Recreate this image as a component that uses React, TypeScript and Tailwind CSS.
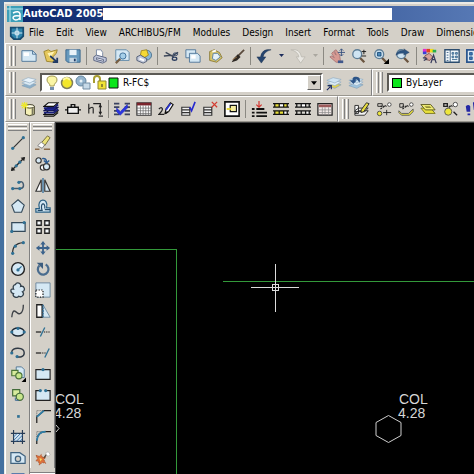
import type { ReactNode } from "react";

type Tool = { label: string; art: ReactNode };

const navy = "#1f3a66";
const steel = "#4a7296";
const ice = "#d5e8f4";

const sheets = (top: string, mid: string) => (
  <>
    <path d="M1 12l7-3 9 2-7 4z" fill={mid} stroke="#7f9db5" strokeWidth=".7" />
    <path d="M1 9l7-3 9 2-7 4z" fill="#dcebf5" stroke="#8fabc1" strokeWidth=".7" />
    <path d="M1 6l7-3 9 2-7 4z" fill={top} stroke="#8fabc1" strokeWidth=".7" />
  </>
);

const lens = (
  <>
    <path d="M10 11l5 5" stroke="#6b5540" strokeWidth="2.6" />
    <circle cx="7" cy="7" r="5" fill="#cfe4f2" stroke="#5d7d96" strokeWidth="1.5" />
  </>
);

const fileTools: Tool[] = [
  { label: "New", art: <><path d="M1 3h12l4 4v8H1z" fill={ice} stroke={steel} /><path d="M13 3v4h4" fill="none" stroke={steel} /><path d="M3 5h6v4H3z" fill="#fff" /></> },
  { label: "Open", art: <><path d="M1 4l5-2 3 2 7-2-1 4-4 4 2 6-9-1z" fill="#e5c75b" stroke="#9a822b" /><path d="M5 6l8-2-5 7z" fill="#fff4b5" /><path d="M8 9l7 6m-4 1h5v-5" fill="none" stroke={navy} strokeWidth="2" /></> },
  { label: "Save", art: <><path d="M1 2h16v14H3l-2-2z" fill="#6699bd" stroke="#35628a" /><path d="M5 2h8v6H5z" fill="#e8f2f8" /><path d="M5 11h8v5H5z" fill="#c7d7e3" /><path d="M10 12h2v3h-2z" fill={navy} /></> },
];
const printTools: Tool[] = [
  { label: "Plot", art: <><path d="M5 9V2h5l2 3v5z" fill="#fff" stroke="#7484a0" /><path d="M2 10l3-2 11 3v4l-4 2-10-3z" fill="#c3c9dc" stroke="#56607d" /><path d="M5 11l8 2v2l-8-2z" fill="#f8f8ff" stroke="#56607d" /></> },
  { label: "Plot Preview", art: <><path d="M2 2h12l3 3v9H2z" fill={ice} stroke="#5c86a6" /><circle cx="10" cy="9" r="3.5" fill="#a5cfe9" stroke="#376a95" /><path d="M7 12l-5 5" stroke="#765e43" strokeWidth="2.5" /></> },
  { label: "Publish", art: <><circle cx="12" cy="8" r="5.5" fill="#8bb8d5" stroke="#476f8d" /><path d="M6 3l6-1 2 6-5 3-4-3z" fill="#f5d935" stroke="#a4881a" /><path d="M1 10l4-2 7 4v3l-4 2-7-3z" fill="#c3cadb" stroke="#4a5771" /><path d="M4 12l5 2" stroke="#fff" strokeWidth="2" /></> },
];
const clipTools: Tool[] = [
  { label: "Cut", art: <><path d="M1 9l11-1 5-3M3 5l9 5" fill="none" stroke="#3c4658" strokeWidth="1.6" /><ellipse cx="14" cy="7" rx="2.5" ry="1.5" fill="none" stroke="#2c3e60" /><ellipse cx="13" cy="12" rx="2.5" ry="1.8" fill="none" stroke="#2c3e60" strokeWidth="1.5" /></> },
  { label: "Copy", art: <><path d="M1 2h11v9H1z" fill={ice} stroke={steel} /><path d="M5 6h9l3 3v7H5z" fill={ice} stroke={steel} /><path d="M7 8h5v4H7z" fill="#fff" /></> },
  { label: "Paste", art: <><path d="M3 4l5-2 6 3 3 6-6 5-8-2z" fill="#d9c66c" stroke="#8b7a35" /><path d="M7 6h5l3 4-5 4-4-2z" fill="#e5f1f8" stroke="#537ca0" /><path d="M6 4l4-1" stroke="#fff" strokeWidth="2" /></> },
  { label: "Match Properties", art: <><path d="M17 2l-8 8" stroke="#5a4a3c" strokeWidth="2" /><path d="M10 7l3 3-4 4-6 2 3-5z" fill="#2e2925" /><path d="M4 13l5-3" stroke="#9e784b" /></> },
];
const viewTools: Tool[] = [
  { label: "Pan", art: <><path d="M3 6l2-2 3 4-2-5 2-1 4 6 1 8H8L1 10l2-1 3 2z" fill="#d79a93" stroke="#a87878" /><path d="M14 1v8M10 5h8M12 3l2-2 2 2M12 7l2 2 2-2" fill="none" stroke="#37517e" /><path d="M10 14h6v3h-6z" fill="#40588b" /></> },
  { label: "Zoom Realtime", art: <>{lens}<path d="M12 4h5M14.500 2v5M12 9h5" stroke="#111" /></> },
  { label: "Zoom Window", art: <>{lens}<path d="M5 5h4v4H5z" fill="#4b89ba" stroke="#1c4a76" /><path d="M18 12v6h-6z" fill="#000" /></> },
  { label: "Zoom Previous", art: <>{lens}<path d="M1 8q2-6 10-5l-1-2 6 4-6 3V6Q6 5 1 8z" fill="#2d5582" stroke="#1b365a" strokeWidth=".5" /></> },
];
const paletteTools: Tool[] = [
  { label: "Properties", art: <><path d="M1 1h4v4H1z" fill="#e32bd1" /><path d="M5 1h4v4H5z" fill="#e34020" /><path d="M9 1h4v4H9z" fill="#f2db1e" /><path d="M1 4h4v3H1z" fill="#3642d7" /><path d="M12 2h4v3h-4z" fill="#28af4b" /><path d="M3 9l5-3 4 4-3 4-5-1z" fill="#d8a298" stroke="#7c5151" /><path d="M1 11h4M2 14l4-2M10 17l3-9 3 9M11 13h4" fill="none" stroke="#383b5d" strokeWidth="1.4" /></> },
  { label: "DesignCenter", art: <><path d="M1 2h16v14H1z" fill="#f5fafc" stroke="#2b4c6e" strokeWidth="1.5" /><path d="M7 2v14M3 5h2M3 8h2M3 11h2M3 14h2" stroke="#375d83" /><path d="M9 5h2v2H9zM13 5h2v2h-2zM9 9h2v2H9zM13 9h2v2h-2zM9 13h6" fill="#89aeca" stroke="#3e6b91" /></> },
  { label: "Tool Palettes", art: <><path d="M1 2h16v14H1z" fill="#dceaf5" stroke="#2b568e" strokeWidth="2" /><path d="M4 5h3v3H4zM4 10h3v3H4zM10 5h5M10 9h5" fill="#3d77b5" stroke="#24578e" /></> },
];

const block = <path d="M2 7h9v9H2zM2 10h9M2 13h9" fill="#f2f2f2" stroke="#333" strokeWidth="1.3" />;
const rack = (fill: string) => (
  <>
    <path d="M2 3h14v4H2zM2 11h14v4H2z" fill={fill} />
    <path d="M7 3h5v4H7zM12 11h4v4h-4z" fill="#fff" />
    <path d="M0 3h18M0 7h18M0 11h18M0 15h18M2 3v4M7 3v4M12 3v4M16 3v4M2 11v4M7 11v4M12 11v4M16 11v4" stroke="#111" strokeWidth="1.4" />
  </>
);

const archTools: Tool[] = [
  { label: "New Asset", art: <><path d="M5 6v9q4 3 10 0V6z" fill="#f4efb6" stroke="#33301c" /><ellipse cx="10" cy="6" rx="5" ry="2" fill="#fffde4" stroke="#33301c" /><path d="M12 8h2v8h-2z" fill="#77755c" /><path d="M4 1v8M0 5h8M1 2l6 6M7 2L1 8" stroke="#ede82b" strokeWidth="1.3" /></> },
  { label: "Layers", art: <><path d="M1 15l5-4h11l-5 4z" fill="#fff" stroke="#111" strokeWidth="1.3" /><path d="M1 11l5-4h11l-5 4z" fill="#1d2596" stroke="#0e1250" strokeWidth="1.3" /><path d="M1 6l5-4h11l-5 4z" fill="#fff" stroke="#111" strokeWidth="1.3" /><path d="M1 8h11l5-4M1 13h11l5-4" fill="none" stroke="#191e79" strokeWidth="2" /><path d="M1 17h11l5-4" fill="none" stroke="#111" strokeWidth="1.3" /></> },
  { label: "Room Tag", art: <><path d="M3 7h12v7H3zM7 7V4h4v3" fill="#eee" stroke="#111" strokeWidth="1.5" /><path d="M0 10h3M15 10h3" stroke="#111" strokeWidth="1.3" /></> },
  { label: "Text Height", art: <><path d="M2 3v11M2 9q5-4 5 0v5M7 3h8v11" fill="none" stroke="#222" strokeWidth="1.3" /><path d="M15 3l2 4h-4zM13 12h4l-2 4z" fill="#222" /><path d="M13 17h5" stroke="#222" strokeWidth="1.3" /></> },
];
const recordTools: Tool[] = [
  { label: "Check Records", art: <><path d="M0 2h6v2H0zM0 6h6v2H0zM0 10h6v2H0zM0 14h6v2H0zM12 2h6v2h-6zM12 6h6v2h-6zM12 10h6v2h-6zM12 14h6v2h-6z" fill="#3b4260" /><path d="M3 8l4 4 8-8v4l-8 8-4-4z" fill="#2a35e0" stroke="#2129c0" strokeWidth=".7" /></> },
  { label: "Table", art: <><path d="M1 2h16v14H1z" fill="#fff" stroke="#333" strokeWidth="1.3" /><path d="M1 2h16v3H1z" fill="#7b242c" /><path d="M1 8h16M1 11h16M1 14h16M5 5v11M8 5v11M11 5v11M14 5v11" stroke="#666" strokeWidth=".8" /></> },
  { label: "Edit Data", art: <><path d="M1 9q3-3 4 0 0 2-4 6h6" fill="none" stroke="#222" strokeWidth="1.4" /><path d="M8 14l1-5 5-7 3 2-5 8z" fill="#fff" stroke="#111" strokeWidth="1.3" /><path d="M9 10l5-7" stroke="#2b35cf" strokeWidth="2" /><path d="M8 14l3-2" stroke="#111" strokeWidth="2" /></> },
  { label: "Accept", art: <>{block}<path d="M11 7l2 4 4-10" fill="none" stroke="#2528cf" strokeWidth="1.8" /></> },
  { label: "Reject", art: <>{block}<path d="M11 1l6 6M17 1l-6 6" stroke="#d43b30" strokeWidth="1.4" /></> },
  { label: "Link", art: <><path d="M1 1h16v16H1z" fill="#fff" stroke="#111" strokeWidth="1.8" /><path d="M7 5h7v7H7z" fill="#f5eda0" stroke="#111" strokeWidth="1.3" /><path d="M3 9h5" stroke="#e5d52b" strokeWidth="2" /></> },
];
const listTools: Tool[] = [
  { label: "Insert List", art: <><path d="M9 0v7M6 4l3 3 3-3" fill="none" stroke="#d3322c" strokeWidth="1.3" /><path d="M6 9h9M6 13h12M6 17h12M1 9h3M1 13h3M1 17h3" stroke="#111" strokeWidth="2" /></> },
  { label: "Stack Plan", art: rack("#e8df39") },
  { label: "Block Plan", art: rack("#d9d7d0") },
  { label: "Report", art: <><path d="M1 3h16v13H1z" fill="#f2e9e7" stroke="#222" strokeWidth="1.4" /><path d="M2 4h14v3H2z" fill="#9d5b5b" /><path d="M2 10h14M2 13h14M6 7v9M9 7v9M13 7v9" stroke="#888" strokeWidth=".8" /></> },
];

const nodes = <path d="M5 6h7M5 9l6-4" fill="none" stroke="#222" strokeWidth="1.2" strokeDasharray="2 1" />;
const assetTools: Tool[] = [
  { label: "Edit Layer", art: <><path d="M1 5h4v9H1zM1 11l4-3h11l-4 4H1zM1 14l4-3h11l-4 5H1z" fill="#f5f5f5" stroke="#222" /><path d="M8 10l6-8 3 1-6 9-3 1z" fill="#e8dd42" stroke="#222" /></> },
  { label: "Move Node", art: <>{nodes}<circle cx="4" cy="14" r="2.500" fill="#eee63b" stroke="#444" /><circle cx="15" cy="4" r="2" fill="#fff" stroke="#444" /><path d="M2 3h5v3H2zM8 13h9M12 10v6" fill="none" stroke="#222" /></> },
  { label: "Layer Node", art: <>{nodes}<path d="M1 11l3 3h8l5-5v3l-4 4H4l-3-3z" fill="#eee63b" stroke="#555" /><circle cx="15" cy="4" r="2" fill="#fff" stroke="#444" /><path d="M2 3h4v4H2z" fill="none" stroke="#222" /></> },
  { label: "Isolate Layer", art: <><path d="M1 8h11l5 6H6z" fill="#e9e13c" stroke="#77731f" /><path d="M1 4h11l5 6H6z" fill="#f3ef75" stroke="#55521b" /><path d="M5 6h6l2 2H7z" fill="#948e37" /></> },
  { label: "Node Status", art: <>{nodes}<circle cx="7" cy="12" r="4" fill="#eee63b" stroke="#555" /><circle cx="15" cy="4" r="2.500" fill="#fff" stroke="#444" /><path d="M2 3h4v3H2zM13 12l4 4" fill="none" stroke="#222" strokeWidth="1.5" /></> },
  { label: "Walk", art: <path d="M2 6q3-3 5 0v6H3zM4 14h3v2H4zM10 2q4-3 6 1v7h-5zM12 12h4v3h-4z" fill="#2428a5" /> },
];

const dot = (x: number, y: number) => <circle cx={x} cy={y} r="1.800" fill="#2f7094" />;
const drawTools: Tool[] = [
  { label: "Line", art: <><path d="M3 15L15 3" stroke="#333" strokeWidth="1.3" />{dot(3, 15)}{dot(15, 3)}</> },
  { label: "Construction Line", art: <><path d="M2 16L16 2" stroke="#222" strokeWidth="1.5" /><path d="M1 17l1-5 4 4zM17 1l-5 1 4 4z" fill="#222" />{dot(7, 11)}{dot(11, 7)}</> },
  { label: "Polyline", art: <><path d="M2 13h10q4-1 3-5t-5-2" fill="none" stroke="#445b70" strokeWidth="1.7" />{dot(3, 13)}{dot(11, 13)}{dot(10, 6)}</> },
  { label: "Polygon", art: <path d="M9 2l7 6-3 8H5L2 8z" fill={ice} stroke="#354a5a" strokeWidth="1.3" /> },
  { label: "Rectangle", art: <><path d="M2 4h15v10H2z" fill={ice} stroke="#354a5a" strokeWidth="1.4" />{dot(2, 14)}{dot(16, 4)}</> },
  { label: "Arc", art: <><path d="M3 16Q2 4 15 3" fill="none" stroke="#333" strokeWidth="1.4" />{dot(3, 15)}{dot(6, 7)}{dot(15, 3)}</> },
  { label: "Circle", art: <><circle cx="9" cy="9" r="7.200" fill={ice} stroke="#222" strokeWidth="1.6" /><path d="M9 10l4-4" stroke="#2f7094" strokeWidth="1.4" />{dot(9, 10)}</> },
  { label: "Revision Cloud", art: <path d="M6 3c2-4 7-1 6 2 4-1 6 4 2 6 3 3-1 7-4 5-3 3-8 0-6-3-4-1-4-6 0-5-1-3 0-5 2-5z" fill={ice} stroke="#34424d" strokeWidth="1.5" /> },
  { label: "Spline", art: <path d="M2 16c1-10 4-7 6-5s7 2 7-9" fill="none" stroke="#3d4146" strokeWidth="1.5" /> },
  { label: "Ellipse", art: <><ellipse cx="9" cy="9" rx="7" ry="4.500" fill={ice} stroke="#1d2833" strokeWidth="1.5" />{dot(2, 9)}{dot(16, 9)}{dot(9, 5)}</> },
  { label: "Ellipse Arc", art: <><path d="M2 8c0-6 14-6 14 1 0 5-6 5-8 4" fill="none" stroke="#303a45" strokeWidth="1.6" />{dot(2, 9)}{dot(8, 13)}</> },
  { label: "Insert Block", art: <><path d="M7 1h6l3 3v9H7z" fill={ice} stroke="#4c7394" /><path d="M2 5h7v6H2z" fill="#d7eb9c" stroke="#4b7338" strokeWidth="1.3" /><circle cx="10" cy="11" r="3.500" fill="#c9e68c" stroke="#4b7338" strokeWidth="1.3" /><path d="M18 13v5h-5z" fill="#000" /></> },
  { label: "Make Block", art: <><path d="M3 3h8v7H3z" fill="#d7eb9c" stroke="#446b3a" strokeWidth="1.3" /><circle cx="11" cy="11" r="4" fill="#c9e68c" stroke="#446b3a" strokeWidth="1.3" /><path d="M6 12v3h4" fill="none" stroke="#2f6090" /></> },
  { label: "Point", art: <path d="M8 8h3v3H8z" fill="#2f7094" /> },
  { label: "Hatch", art: <><path d="M4 5h10v9H4z" fill="#d3e5f2" /><path d="M4 1v16M14 1v16M1 5h16M1 14h16" stroke="#263b55" strokeWidth="1.3" /><path d="M4 9l4-4M4 13l8-8M7 14l7-7M11 14l3-3" stroke="#2f68a0" /></> },
  { label: "Region", art: <><path d="M1 15V3h10l6 4v8z" fill={ice} stroke="#41637f" strokeWidth="1.4" /><circle cx="9" cy="10" r="3" fill="#d4d0c8" stroke="#41637f" strokeWidth="1.4" /></> },
  { label: "Insert Table", art: <><path d="M2 3h14v13H2z" fill="#fff" stroke="#385d93" /><path d="M2 3h14v3H2z" fill="#4d7bbd" /><path d="M7 6v10M11 6v10M2 10h14" stroke="#6b90c4" /></> },
];
const modifyTools: Tool[] = [
  { label: "Erase", art: <><path d="M7 9l7-8 3 2-6 9z" fill="#ece27b" stroke="#6b6430" /><path d="M3 12l4-4 4 3-3 4z" fill="#fff" stroke="#777" /><path d="M0 16h5M10 16h7" stroke="#8b6a4a" strokeWidth="1.5" /></> },
  { label: "Copy Object", art: <><circle cx="4" cy="5" r="3" fill={ice} stroke="#333" strokeWidth="1.3" /><circle cx="9" cy="13" r="3" fill="#fff" stroke="#333" strokeWidth="1.3" /><circle cx="13" cy="12" r="3.500" fill={ice} stroke="#333" strokeWidth="1.4" /><path d="M8 3q5-1 5 4M10 5l3 3 3-3" fill="none" stroke="#2c5c91" strokeWidth="1.6" /></> },
  { label: "Mirror", art: <><path d="M7 3v13H1z" fill="#fff" stroke="#333" strokeWidth="1.3" /><path d="M11 3v13h6z" fill={ice} stroke="#333" strokeWidth="1.3" /><path d="M9 1v17" stroke="#2b6b9d" strokeWidth="1.4" /></> },
  { label: "Offset", art: <><path d="M1 16v-4h4c-4-12 11-13 8-1h4v5z" fill={ice} stroke="#2d6286" strokeWidth="1.4" /><path d="M3 14h5c-3-9 4-10 3-2M11 13h6" fill="none" stroke="#244a68" strokeWidth="1.3" /></> },
  { label: "Array", art: <path d="M2 2h5v5H2zM11 2h5v5h-5zM2 11h5v5H2zM11 11h5v5h-5z" fill="#f8fbfd" stroke="#222" strokeWidth="1.5" /> },
  { label: "Move", art: <><path d="M9 3v12M3 9h12" stroke="#3c638c" strokeWidth="2" /><path d="M9 1l3 4H6zM9 17l3-4H6zM1 9l4-3v6zM17 9l-4-3v6z" fill="#3c638c" /></> },
  { label: "Rotate", art: <><path d="M5 5a6 6 0 1 0 7-1" fill="none" stroke="#4a6c8e" strokeWidth="2.500" /><path d="M2 2h7v7z" fill="#3d5d7e" /></> },
  { label: "Scale", art: <><path d="M1 1h16v16H1z" fill={ice} stroke="#68839a" /><path d="M1 9h8v8H1z" fill="#fff" stroke="#222" strokeWidth="1.4" strokeDasharray="1.500 1.500" /></> },
  { label: "Stretch", art: <><path d="M9 2l8 14H9z" fill={ice} stroke="#6b899e" /><path d="M2 2h6v14H2z" fill="#fff" stroke="#222" strokeWidth="1.5" /><path d="M9 2v14" stroke="#2f6c96" strokeDasharray="2 1" strokeWidth="1.5" /></> },
  { label: "Trim", art: <><path d="M1 9h6" stroke="#222" strokeWidth="1.4" /><path d="M10 9h7" stroke="#222" strokeWidth="1.4" strokeDasharray="1.500 1" /><path d="M6 14l5-10" stroke="#2f7094" strokeWidth="1.5" /></> },
  { label: "Extend", art: <><path d="M1 9h6" stroke="#222" strokeWidth="1.4" /><path d="M8 9h5" stroke="#222" strokeWidth="1.4" strokeDasharray="1.500 1" /><path d="M11 14l5-10" stroke="#2f7094" strokeWidth="1.5" /></> },
  { label: "Break at Point", art: <><path d="M1 4h16v11H1z" fill={ice} stroke="#222" strokeWidth="1.3" />{dot(9, 4)}</> },
  { label: "Break", art: <><path d="M1 4h16v11H1z" fill={ice} /><path d="M5 4H1v11h16V4h-4" fill="none" stroke="#222" strokeWidth="1.4" />{dot(6, 4)}{dot(12, 4)}</> },
  { label: "Chamfer", art: <><path d="M2 17V10l8-7h8" fill="none" stroke="#222" strokeWidth="1.4" /><path d="M2 10l8-7" stroke="#2f7fa8" strokeWidth="2" /><path d="M2 9V3h7" fill="none" stroke="#555" strokeDasharray="1 1" /></> },
  { label: "Fillet", art: <><path d="M2 17v-4Q3 3 12 3h6" fill="none" stroke="#222" strokeWidth="1.4" /><path d="M2 13Q3 3 12 3" fill="none" stroke="#2f7fa8" strokeWidth="2" /><path d="M2 9V3h5" fill="none" stroke="#555" strokeDasharray="1 1" /></> },
  { label: "Explode", art: <><path d="M1 6l4 1 2-2 1 3 4 0-2 3 2 4-4-1-3 3-1-4-3-1 2-2z" fill="#dc713b" stroke="#9d4a2a" strokeWidth=".8" strokeDasharray="2 1" /><path d="M5 9l3 1-2 3z" fill="#f7db5d" /><path d="M10 9l3-4" stroke="#554b42" strokeWidth="1.500" /><path d="M12 3l3-1 2 3-2 2-2-1z" fill="#fff" stroke="#aaa" strokeWidth=".7" /></> },
];

const menus = ["File", "Edit", "View", "ARCHIBUS/FM", "Modules", "Design", "Insert", "Format", "Tools", "Draw", "Dimension"];

function Tools({ items, vertical = false }: { items: Tool[]; vertical?: boolean }) {
  return (
    <div className={vertical ? "flex flex-col items-center" : "flex shrink-0 items-center"}>
      {items.map((tool) => (
        <button key={tool.label} aria-label={tool.label} className="flex h-[21px] w-[22px] shrink-0 items-center justify-center hover:bg-white/40">
          <svg viewBox="0 0 18 18" className="size-4" fill="none">{tool.art}</svg>
        </button>
      ))}
    </div>
  );
}

function Grip() {
  return (
    <div className="flex shrink-0 gap-px self-stretch px-0.5 py-0.5">
      <span className="w-[3px] border-r border-l border-r-[#808080] border-l-white" />
      <span className="w-[3px] border-r border-l border-r-[#808080] border-l-white" />
    </div>
  );
}

function Sep() {
  return <span className="mx-0.5 h-[18px] w-px shrink-0 bg-[#8b8982]" />;
}

function Bar({ children, fill = false }: { children: ReactNode; fill?: boolean }) {
  return (
    <div className={`flex items-center overflow-hidden border-t border-b border-l border-t-white border-b-[#99968e] border-l-white pl-px ${fill ? "min-w-0 flex-1" : "shrink-0 border-r border-r-[#808080]"}`}>
      {children}
    </div>
  );
}

function SideBar({ items }: { items: Tool[] }) {
  return (
    <div className="w-[25px] border-t border-r border-l border-t-white border-r-[#808080] border-l-white">
      <div className="mx-0.5 my-px flex flex-col gap-px">
        <span className="h-[3px] border-t border-b border-t-white border-b-[#808080]" />
        <span className="h-[3px] border-t border-b border-t-white border-b-[#808080]" />
      </div>
      <Tools items={items} vertical />
    </div>
  );
}

function Menu() {
  return (
    <nav className="flex h-[21px] shrink-0 items-center gap-3 overflow-hidden pl-1 text-[10px] whitespace-nowrap">
      <svg viewBox="0 0 18 18" className="-mr-2 size-4 shrink-0">
        <path d="M1 2h16v11l-4 4H5l-4-4z" fill="#164b70" />
        <path d="M3 4h12v8l-3 3H6l-3-3z" fill="#2d83ab" />
        <path d="M9 3v12M3 9h12M7 7h4v4H7z" fill="none" stroke="#e7f5fc" />
      </svg>
      {menus.map((name) => (
        <button key={name} className="shrink-0">{name}</button>
      ))}
    </nav>
  );
}

function LayerSelect() {
  return (
    <div className="flex h-[19px] w-[283px] shrink-0 items-center border-2 border-r-white border-b-white border-t-[#5c5a55] border-l-[#5c5a55] bg-white pl-px">
      <svg viewBox="0 0 76 18" className="h-[18px] w-[76px] shrink-0">
        <path d="M7 12c0-3-3-3-3-6s2-4 5-4 5 1 5 4-3 3-3 6z" fill="#fbf6a5" stroke="#a39b55" />
        <path d="M7 13h4v3H7z" fill="#7691ae" />
        <circle cx="24" cy="9" r="5.500" fill="#f3e72a" stroke="#807f5c" strokeWidth="1.500" />
        <path d="M20 6q4-4 7 0" fill="none" stroke="#fff9a0" strokeWidth="2" />
        <circle cx="38" cy="7" r="5" fill="#94b4cd" stroke="#66879f" />
        <circle cx="38" cy="7" r="1.500" fill="#e8f2f7" />
        <path d="M40 9h7v6h-7z" fill="#c7dae8" stroke="#728da3" />
        <path d="M51 9V5q0-3 3-3t3 3v3" fill="none" stroke="#a89d31" strokeWidth="2" />
        <path d="M55 7h8v8h-8z" fill="#f1e336" stroke="#928831" />
        <path d="M58 10h2v3h-2z" fill="#928831" />
        <path d="M66 4h9v10h-9z" fill="#0be51c" stroke="#111" />
      </svg>
      <select aria-label="Layer" className="h-full min-w-0 flex-1 appearance-none bg-white pl-1 text-[10px] outline-none">
        <option>R-FC$</option>
      </select>
      <span className="pointer-events-none flex h-full w-3.5 items-center justify-center border border-t-white border-r-[#606060] border-b-[#606060] border-l-white bg-[#d4d0c8]">
        <svg viewBox="0 0 8 5" className="h-1 w-1.5"><path d="M0 0h8L4 5z" fill="#000" /></svg>
      </span>
    </div>
  );
}

function Caret({ color }: { color: string }) {
  return (
    <svg viewBox="0 0 12 6" className="h-1.5 w-3 shrink-0"><path d="M4 1h5L6.500 4z" fill={color} /></svg>
  );
}

const undo: Tool[] = [{ label: "Undo", art: <path d="M17 2Q7 0 5 10H1l5 7 5-7H8q1-6 9-8z" fill="#26456f" stroke="#182d4c" strokeWidth=".5" /> }];
const redo: Tool[] = [{ label: "Redo", art: <path d="M1 2q10-2 12 8h4l-5 7-5-7h3q-1-6-9-8z" fill="#e9e7e2" stroke="#bebbb3" /> }];
const layerManager: Tool[] = [{ label: "Layer Manager", art: sheets("#e8f3fb", "#8cb0ca") }];
const layerTools: Tool[] = [
  { label: "Make Object's Layer Current", art: <>{sheets("#cfe4f2", "#e2d252")}<path d="M1 17l4-4M2 12h4v4" fill="none" stroke="#1f2c63" strokeWidth="1.3" /></> },
  { label: "Layer Previous", art: <>{sheets("#cfe4f2", "#9ec4df")}<path d="M13 9q2-8-5-7-3 0-3 4H2l4 4 4-4H8q2-3 5 3z" fill="#2c5487" /></> },
];

function Drawing() {
  return (
    <main className="min-w-0 flex-1 overflow-hidden border-t border-l border-[#404040] bg-black">
      <svg className="block size-full font-['Liberation_Sans',sans-serif] text-[14px]" shapeRendering="crispEdges">
        <g stroke="#33993a" strokeWidth="1">
          <line x1="0" y1="126.500" x2="121" y2="126.500" />
          <line x1="120.500" y1="126" x2="120.500" y2="100%" />
          <line x1="167" y1="158.500" x2="100%" y2="158.500" />
        </g>
        <g stroke="#dcdcdc" fill="none">
          <path d="M195 164.500h48M219.500 141v48" />
          <path d="M216.500 161.500h6v6h-6z" />
        </g>
        <g stroke="#cfcfcf" fill="none" shapeRendering="auto">
          <path d="M332.500 292.500l12.500 7v13l-12.500 7-12.500-7v-13z" />
          <path d="M0 302l3 3.500-3 3.500" />
        </g>
        <g fill="#d6d6d6">
          <text x="-1" y="281">COL</text>
          <text x="-2" y="295">4.28</text>
          <text x="343" y="281">COL</text>
          <text x="342" y="295">4.28</text>
        </g>
      </svg>
    </main>
  );
}

export default function App() {
  return (
    <div className="flex h-screen flex-col overflow-hidden bg-[#44709f] pt-0.5 pl-1 font-['DejaVu_Sans_Condensed','DejaVu_Sans',sans-serif] text-black">
      <div className="flex min-h-0 flex-1 flex-col border-t-2 border-l border-[#eceae5] bg-[#d4d0c8] pt-0.5">
        <header className="ml-0.5 flex h-4 shrink-0 items-center bg-linear-to-r from-[#0a246a] to-[#5678b4]">
          <svg viewBox="0 0 16 16" className="size-4 shrink-0">
            <path d="M0 0h16v16H0z" fill="#3e9fb8" />
            <path d="M3 0v16M0 3h16" stroke="#bdeaf2" />
            <path d="M6 7q6-3 7 1v6M13 10q-7-1-7 2 2 4 7 0" fill="none" stroke="#fff" strokeWidth="1.500" />
          </svg>
          <h1 className="shrink-0 text-[11px] leading-4 font-bold text-white">AutoCAD 2005</h1>
          <div className="mr-[82px] h-3 flex-1 bg-white" />
        </header>
        <Menu />
        <div className="flex h-[26px] shrink-0">
          <Bar fill>
            <Grip />
            <Tools items={fileTools} />
            <Sep />
            <Tools items={printTools} />
            <Sep />
            <Tools items={clipTools} />
            <Sep />
            <Tools items={undo} />
            <Caret color="#1c2c5c" />
            <Tools items={redo} />
            <Caret color="#aaa79f" />
            <Sep />
            <Tools items={viewTools} />
            <Sep />
            <Tools items={paletteTools} />
          </Bar>
        </div>
        <div className="flex h-[27px] shrink-0">
          <Bar>
            <Grip />
            <Tools items={layerManager} />
            <LayerSelect />
            <Tools items={layerTools} />
            <span className="w-1" />
          </Bar>
          <Bar fill>
            <Grip />
            <div className="ml-0.5 flex h-[19px] min-w-0 flex-1 items-center border-2 border-r-0 border-b-white border-t-[#5c5a55] border-l-[#5c5a55] bg-white pl-[3px]">
              <span className="size-2.5 shrink-0 border border-black bg-[#0be51c]" />
              <select aria-label="Color" className="h-full min-w-0 flex-1 appearance-none bg-white pl-1 text-[10px] outline-none">
                <option>ByLayer</option>
              </select>
            </div>
          </Bar>
        </div>
        <div className="flex h-[26px] shrink-0">
          <Bar>
            <Grip />
            <Tools items={archTools} />
            <Sep />
            <Tools items={recordTools} />
            <Sep />
            <Tools items={listTools} />
            <span className="w-px" />
          </Bar>
          <Bar fill>
            <Grip />
            <Tools items={assetTools} />
          </Bar>
        </div>
        <div className="flex min-h-0 flex-1">
          <SideBar items={drawTools} />
          <div className="flex w-[25px] flex-col overflow-hidden">
            <SideBar items={modifyTools} />
            <div className="mt-1 flex-1 border-t border-[#808080] bg-white" />
          </div>
          <Drawing />
        </div>
      </div>
    </div>
  );
}
